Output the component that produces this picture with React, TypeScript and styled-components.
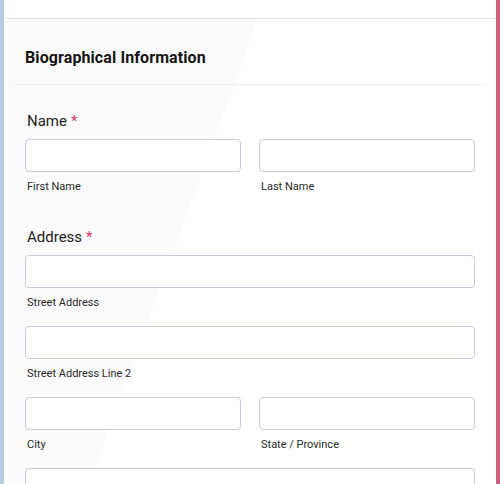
import styled, { createGlobalStyle } from 'styled-components'

const GlobalStyle = createGlobalStyle`
  body {
    margin: 0;
    font-family: Roboto, "Liberation Sans", Arial, sans-serif;
    background: #fff;
  }
`

const Page = styled.div`
  display: flex;
  height: 484px;
  overflow: hidden;
`

const Strip = styled.div<{ $color: string }>`
  width: 4px;
  flex-shrink: 0;
  background: ${(p) => p.$color};
`

const Card = styled.div`
  flex: 1;
  background: linear-gradient(110deg, #fbfbfc 0, #fbfbfc 245px, #ffffff 245px);
`

const TopBar = styled.div`
  height: 18px;
  border-bottom: 1px solid #dedfee;
  background: #fff;
`

const SectionHeader = styled.div`
  margin: 0 11px;
  padding: 28px 10px 15px;
  border-bottom: 1px solid #ececf0;
`

const Heading = styled.h2`
  margin: 0;
  font-size: 16px;
  line-height: 22px;
  font-weight: 700;
  color: #141414;
  letter-spacing: 0.1px;
`

const Body = styled.div`
  padding: 27px 21px 0;
`

const Field = styled.div`
  display: flex;
  flex-direction: column;
  margin-bottom: 18px;
`

const Label = styled.div`
  font-size: 15px;
  line-height: 18px;
  color: #222;
  margin-bottom: 9px;
  padding-left: 2px;
`

const Required = styled.span`
  color: #d63a6a;
  margin-left: 4px;
`

const Row = styled.div<{ $cols: number }>`
  display: grid;
  grid-template-columns: repeat(${(p) => p.$cols}, 1fr);
  column-gap: 18px;
  margin-bottom: 16px;
`

const Cell = styled.div`
  display: flex;
  flex-direction: column;
`

const Input = styled.input`
  box-sizing: border-box;
  height: 33px;
  width: 100%;
  border: 1px solid #c9ccda;
  border-radius: 4px;
  background: #fff;
  padding: 0 10px;
  font: inherit;
`

const SubLabel = styled.span`
  margin-top: 8px;
  font-size: 11px;
  line-height: 14px;
  color: #2a2a2a;
  padding-left: 2px;
`

function Group({ labels }: { labels: string[] }) {
  return (
    <Row $cols={labels.length}>
      {labels.map((l, i) => (
        <Cell key={i}>
          <Input />
          {l && <SubLabel>{l}</SubLabel>}
        </Cell>
      ))}
    </Row>
  )
}

export default function App() {
  return (
    <>
      <GlobalStyle />
      <Page>
        <Strip $color="#b8cbe0" />
        <Card>
          <TopBar />
          <SectionHeader>
            <Heading>Biographical Information</Heading>
          </SectionHeader>
          <Body>
            <Field>
              <Label>
                Name<Required>*</Required>
              </Label>
              <Group labels={['First Name', 'Last Name']} />
            </Field>
            <Field>
              <Label>
                Address<Required>*</Required>
              </Label>
              <Group labels={['Street Address']} />
              <Group labels={['Street Address Line 2']} />
              <Group labels={['City', 'State / Province']} />
              <Group labels={['']} />
            </Field>
          </Body>
        </Card>
        <Strip $color="#c9617d" />
      </Page>
    </>
  )
}
